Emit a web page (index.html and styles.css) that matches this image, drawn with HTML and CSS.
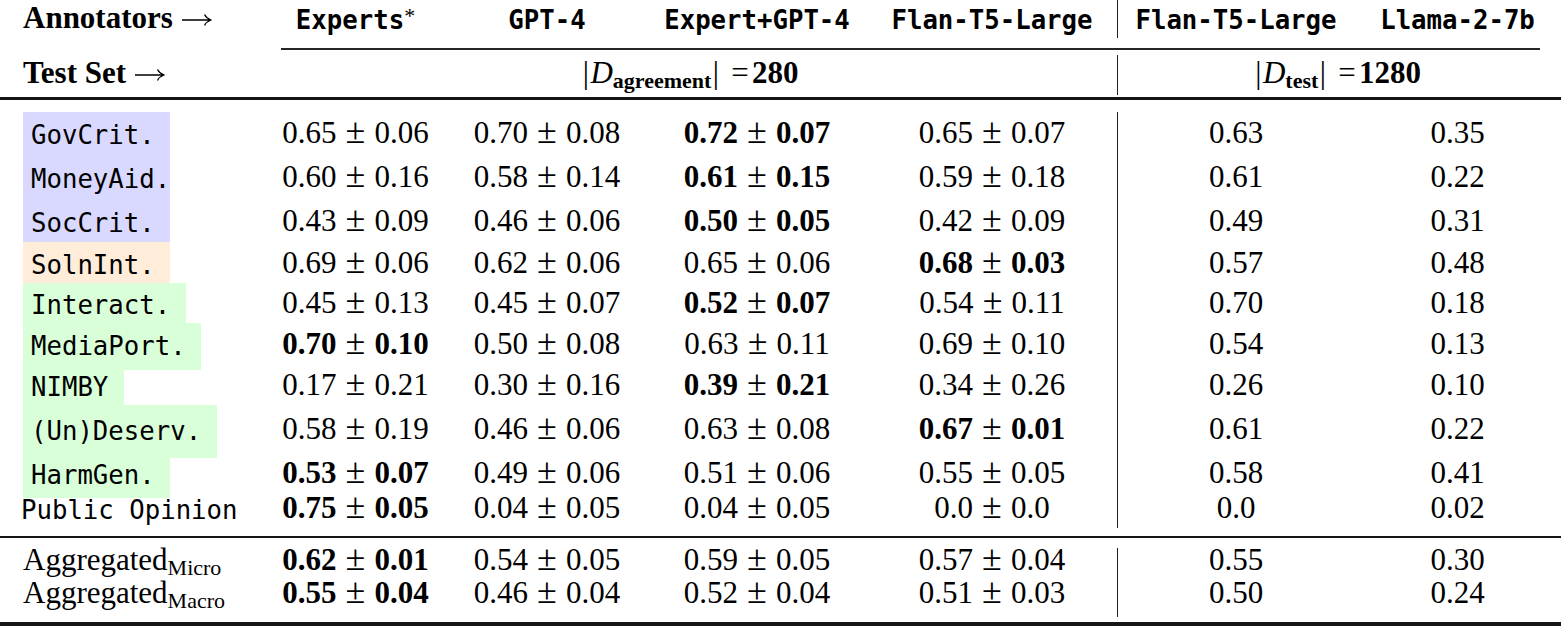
FILE: index.html
```html
<!DOCTYPE html>
<html lang="en">
<head>
<meta charset="utf-8">
<title>Annotator agreement table</title>
<link rel="stylesheet" href="styles.css">
</head>
<body>
<div class="tbl">
  <div class="row hdr1">
    <div class="cell lab b"><span class="t">Annotators <svg class="arr" width="31" height="14" viewBox="0 0 31 14" aria-hidden="true"><path d="M1 7 H29.5 M23.5 1.5 Q25.5 5.5 30 7 Q25.5 8.5 23.5 12.5" fill="none" stroke="#000" stroke-width="1.3"/></svg></span></div>
    <div class="cell mono b">Experts<sup class="ast">*</sup></div>
    <div class="cell mono b">GPT-4</div>
    <div class="cell mono b">Expert+GPT-4</div>
    <div class="cell c4 mono b">Flan-T5-Large</div>
    <div class="vl"></div>
    <div class="cell mono b">Flan-T5-Large</div>
    <div class="cell mono b">Llama-2-7b</div>
  </div>
  <div class="cmid"><div class="cmid-line"></div></div>
  <div class="row hdr2">
    <div class="cell lab b"><span class="t">Test Set <svg class="arr" width="31" height="14" viewBox="0 0 31 14" aria-hidden="true"><path d="M1 7 H29.5 M23.5 1.5 Q25.5 5.5 30 7 Q25.5 8.5 23.5 12.5" fill="none" stroke="#000" stroke-width="1.3"/></svg></span></div>
    <div class="cell span-a"><span class="bar">|</span><i>D</i><sub class="s b">agreement</sub><span class="bar">|</span> <span class="eq">=</span><b>280</b></div>
    <div class="vl"></div>
    <div class="cell span-b"><span class="bar">|</span><i>D</i><sub class="s b">test</sub><span class="bar">|</span> <span class="eq">=</span><b>1280</b></div>
  </div>
  <div class="rule thick"></div>

  <div class="body">
    <div class="row h41">
      <div class="cell lab"><span class="box blue">GovCrit.&nbsp;</span></div>
      <div class="cell">0.65<span class="pm">±</span>0.06</div>
      <div class="cell">0.70<span class="pm">±</span>0.08</div>
      <div class="cell"><b>0.72</b><span class="pm">±</span><b>0.07</b></div>
      <div class="cell c4">0.65<span class="pm">±</span>0.07</div>
      <div class="vl"></div>
      <div class="cell">0.63</div>
      <div class="cell">0.35</div>
    </div>
    <div class="row h47">
      <div class="cell lab"><span class="box blue">MoneyAid.</span></div>
      <div class="cell">0.60<span class="pm">±</span>0.16</div>
      <div class="cell">0.58<span class="pm">±</span>0.14</div>
      <div class="cell"><b>0.61</b><span class="pm">±</span><b>0.15</b></div>
      <div class="cell c4">0.59<span class="pm">±</span>0.18</div>
      <div class="vl"></div>
      <div class="cell">0.61</div>
      <div class="cell">0.22</div>
    </div>
    <div class="row h42">
      <div class="cell lab"><span class="box blue">SocCrit.&nbsp;</span></div>
      <div class="cell">0.43<span class="pm">±</span>0.09</div>
      <div class="cell">0.46<span class="pm">±</span>0.06</div>
      <div class="cell"><b>0.50</b><span class="pm">±</span><b>0.05</b></div>
      <div class="cell c4">0.42<span class="pm">±</span>0.09</div>
      <div class="vl"></div>
      <div class="cell">0.49</div>
      <div class="cell">0.31</div>
    </div>
    <div class="row h41">
      <div class="cell lab"><span class="box orange">SolnInt.&nbsp;</span></div>
      <div class="cell">0.69<span class="pm">±</span>0.06</div>
      <div class="cell">0.62<span class="pm">±</span>0.06</div>
      <div class="cell">0.65<span class="pm">±</span>0.06</div>
      <div class="cell c4"><b>0.68</b><span class="pm">±</span><b>0.03</b></div>
      <div class="vl"></div>
      <div class="cell">0.57</div>
      <div class="cell">0.48</div>
    </div>
    <div class="row h40">
      <div class="cell lab"><span class="box green">Interact.&nbsp;</span></div>
      <div class="cell">0.45<span class="pm">±</span>0.13</div>
      <div class="cell">0.45<span class="pm">±</span>0.07</div>
      <div class="cell"><b>0.52</b><span class="pm">±</span><b>0.07</b></div>
      <div class="cell c4">0.54<span class="pm">±</span>0.11</div>
      <div class="vl"></div>
      <div class="cell">0.70</div>
      <div class="cell">0.18</div>
    </div>
    <div class="row h42">
      <div class="cell lab"><span class="box green">MediaPort.&nbsp;</span></div>
      <div class="cell"><b>0.70</b><span class="pm">±</span><b>0.10</b></div>
      <div class="cell">0.50<span class="pm">±</span>0.08</div>
      <div class="cell">0.63<span class="pm">±</span>0.11</div>
      <div class="cell c4">0.69<span class="pm">±</span>0.10</div>
      <div class="vl"></div>
      <div class="cell">0.54</div>
      <div class="cell">0.13</div>
    </div>
    <div class="row h40">
      <div class="cell lab"><span class="box green">NIMBY&nbsp;</span></div>
      <div class="cell">0.17<span class="pm">±</span>0.21</div>
      <div class="cell">0.30<span class="pm">±</span>0.16</div>
      <div class="cell"><b>0.39</b><span class="pm">±</span><b>0.21</b></div>
      <div class="cell c4">0.34<span class="pm">±</span>0.26</div>
      <div class="vl"></div>
      <div class="cell">0.26</div>
      <div class="cell">0.10</div>
    </div>
    <div class="row h48">
      <div class="cell lab"><span class="box green">(Un)Deserv.&nbsp;</span></div>
      <div class="cell">0.58<span class="pm">±</span>0.19</div>
      <div class="cell">0.46<span class="pm">±</span>0.06</div>
      <div class="cell">0.63<span class="pm">±</span>0.08</div>
      <div class="cell c4"><b>0.67</b><span class="pm">±</span><b>0.01</b></div>
      <div class="vl"></div>
      <div class="cell">0.61</div>
      <div class="cell">0.22</div>
    </div>
    <div class="row h40">
      <div class="cell lab"><span class="box green">HarmGen.&nbsp;</span></div>
      <div class="cell"><b>0.53</b><span class="pm">±</span><b>0.07</b></div>
      <div class="cell">0.49<span class="pm">±</span>0.06</div>
      <div class="cell">0.51<span class="pm">±</span>0.06</div>
      <div class="cell c4">0.55<span class="pm">±</span>0.05</div>
      <div class="vl"></div>
      <div class="cell">0.58</div>
      <div class="cell">0.41</div>
    </div>
    <div class="row pub">
      <div class="cell lab plain mono"><span class="t">Public Opinion</span></div>
      <div class="cell"><b>0.75</b><span class="pm">±</span><b>0.05</b></div>
      <div class="cell">0.04<span class="pm">±</span>0.05</div>
      <div class="cell">0.04<span class="pm">±</span>0.05</div>
      <div class="cell c4">0.0<span class="pm">±</span>0.0</div>
      <div class="vl"></div>
      <div class="cell">0.0</div>
      <div class="cell">0.02</div>
    </div>
  </div>

  <div class="rule mid"></div>

  <div class="agg">
    <div class="row a1">
      <div class="cell lab"><span class="t">Aggregated<sub class="s">Micro</sub></span></div>
      <div class="cell"><b>0.62</b><span class="pm">±</span><b>0.01</b></div>
      <div class="cell">0.54<span class="pm">±</span>0.05</div>
      <div class="cell">0.59<span class="pm">±</span>0.05</div>
      <div class="cell c4">0.57<span class="pm">±</span>0.04</div>
      <div class="vl"></div>
      <div class="cell">0.55</div>
      <div class="cell">0.30</div>
    </div>
    <div class="row a2">
      <div class="cell lab"><span class="t">Aggregated<sub class="s">Macro</sub></span></div>
      <div class="cell"><b>0.55</b><span class="pm">±</span><b>0.04</b></div>
      <div class="cell">0.46<span class="pm">±</span>0.04</div>
      <div class="cell">0.52<span class="pm">±</span>0.04</div>
      <div class="cell c4">0.51<span class="pm">±</span>0.03</div>
      <div class="vl"></div>
      <div class="cell">0.50</div>
      <div class="cell">0.24</div>
    </div>
  </div>

  <div class="rule bottom"></div>
</div>
</body>
</html>
```

FILE: styles.css
```css
* {
  box-sizing: border-box;
  margin: 0;
  padding: 0;
}

html, body {
  background: #ffffff;
}

body {
  margin: 0;
  width: 1561px;
  height: 631px;
  overflow: hidden;
  color: #000000;
  font-family: "Liberation Serif", "Times New Roman", serif;
  font-size: 31px;
}

.tbl {
  width: 1561px;
}

.row {
  --h: 40px;
  --lh: var(--h);
  display: grid;
  grid-template-columns: 281px 149px 234px 186px 267px 1px 236px 207px;
  height: var(--h);
  line-height: var(--lh);
}

.cell {
  text-align: center;
  white-space: nowrap;
}

.c4 {
  padding-left: 17px;
}

.lab {
  text-align: left;
  padding-left: 23px;
  display: flex;
  align-items: stretch;
}

.t {
  display: block;
  white-space: nowrap;
}

.b {
  font-weight: bold;
}

.mono {
  font-family: "DejaVu Sans Mono", "Liberation Mono", monospace;
  font-size: 25.7px;
}

.vl {
  background: #1f1f1f;
}

/* header rows */
.hdr1 {
  --h: 38px;
  --lh: 36px;
}

.hdr1 .mono {
  padding-top: 2px;
}

.arr {
  display: inline-block;
  vertical-align: 1px;
}

.ast {
  font-family: "Liberation Serif", serif;
  font-weight: normal;
  font-size: 22px;
  line-height: 0;
  vertical-align: 6px;
}

.cmid {
  height: 17px;
  padding-top: 10px;
}

.cmid-line {
  margin-left: 281px;
  margin-right: 21px;
  height: 2px;
  background: #262626;
}

.hdr2 {
  --h: 40px;
  --lh: 35px;
}

.span-a {
  grid-column: 2 / 6;
  padding-right: 18px;
}

.span-b {
  grid-column: 7 / 9;
  padding-right: 4px;
}

.bar {
  display: inline-block;
  width: 9px;
  text-align: center;
  font-weight: normal;
}

.eq {
  display: inline-block;
  width: 24px;
  text-align: center;
}

.s {
  font-size: 22px;
  line-height: 0;
  vertical-align: -5px;
}

.rule {
  background: #151515;
}

.rule.thick {
  margin-top: 2px;
  height: 3px;
}

/* body */
.body {
  margin-top: 12px;
}

.h40 { --h: 40px; }
.h41 { --h: 41px; }
.h42 { --h: 42px; }
.h47 { --h: 47px; }
.h48 { --h: 48px; }

.pub {
  --h: 35px;
  --lh: 29px;
}

.box {
  font-family: "DejaVu Sans Mono", "Liberation Mono", monospace;
  font-size: 25.7px;
  line-height: calc(var(--lh) + 5px);
  padding-left: 8px;
  white-space: pre;
}

.plain {
  padding-left: 21px;
  line-height: calc(var(--lh) + 5px);
}

.blue {
  background: #d9d9ff;
}

.orange {
  background: #ffecd9;
}

.green {
  background: #d9ffd9;
}

.pm {
  display: inline-block;
  width: 38px;
  text-align: center;
  font-weight: normal;
  font-size: 36px;
  line-height: 0;
}

.rule.mid {
  margin-top: 8px;
  height: 2px;
}

.agg {
  margin-top: 10px;
}

.a1 {
  --h: 33px;
  --lh: 23px;
}

.a2 {
  --h: 36px;
  --lh: 23px;
}

.rule.bottom {
  margin-top: 5px;
  height: 4px;
}
```
